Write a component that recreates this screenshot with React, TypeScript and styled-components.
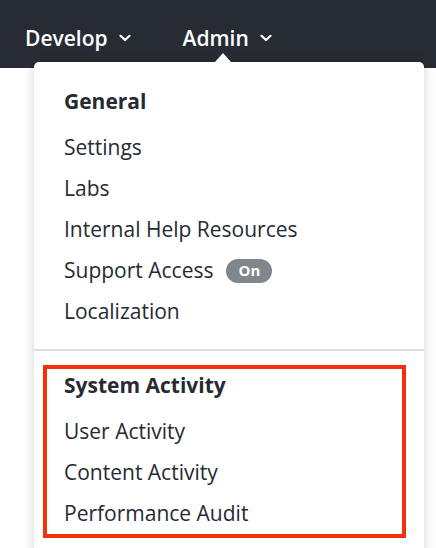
import React from 'react';
import styled, { createGlobalStyle } from 'styled-components';

const GlobalStyle = createGlobalStyle`
  html, body {
    margin: 0;
    padding: 0;
    background: #ffffff;
    font-family: 'Open Sans', 'Liberation Sans', sans-serif;
    -webkit-font-smoothing: antialiased;
  }
`;

const Page = styled.div`
  position: relative;
  width: 436px;
  height: 548px;
  overflow: hidden;
  background: #ffffff;
`;

const TopBar = styled.nav`
  display: flex;
  align-items: center;
  gap: 52px;
  height: 68px;
  padding: 8px 0 0 25px;
  box-sizing: border-box;
  background: #272b33;
`;

const NavItem = styled.div`
  display: flex;
  align-items: center;
  gap: 11px;
  color: #ffffff;
  font-size: 21px;
  font-weight: 600;
`;

const Menu = styled.div`
  position: absolute;
  left: 34px;
  top: 62px;
  width: 390px;
  padding-bottom: 20px;
  background: #ffffff;
  border-radius: 5px;
  box-shadow: 0 2px 12px rgba(0, 0, 0, 0.18);

  &::before {
    content: '';
    position: absolute;
    top: -9px;
    left: 181px;
    border-left: 8px solid transparent;
    border-right: 8px solid transparent;
    border-bottom: 9px solid #ffffff;
  }
`;

const Section = styled.div<{ $highlight?: boolean }>`
  display: flex;
  flex-direction: column;
  padding: ${p => (p.$highlight ? '0 0 0 17px' : '23px 0 17px 30px')};
  margin: ${p => (p.$highlight ? '14px 18px 0 9px' : '0')};
  border: ${p => (p.$highlight ? '4px solid #f3300d' : 'none')};
`;

const Divider = styled.hr`
  margin: 0;
  border: none;
  height: 2px;
  background: #e0e0e0;
`;

const Heading = styled.div`
  color: #262a32;
  font-size: 21px;
  font-weight: 700;
  line-height: 32px;
  margin-bottom: 10px;
`;

const Item = styled.div`
  display: flex;
  align-items: center;
  gap: 13px;
  color: #262a32;
  font-size: 21px;
  line-height: 41px;
`;

const Badge = styled.span`
  display: inline-flex;
  align-items: center;
  justify-content: center;
  width: 46px;
  height: 24px;
  border-radius: 12px;
  background: #7f878d;
  color: #ffffff;
  font-size: 15px;
  font-weight: 700;
  line-height: 1;
`;

const Chevron = () => (
  <svg width="12" height="8" viewBox="0 0 12 8" fill="none">
    <path d="M1.5 1.8 L6 6 L10.5 1.8" stroke="#ffffff" strokeWidth="2.2" strokeLinecap="round" strokeLinejoin="round" />
  </svg>
);

const general = ['Settings', 'Labs', 'Internal Help Resources', 'Support Access', 'Localization'];
const activity = ['User Activity', 'Content Activity', 'Performance Audit'];

export default function App() {
  return (
    <Page>
      <GlobalStyle />
      <TopBar>
        <NavItem>
          Develop <Chevron />
        </NavItem>
        <NavItem>
          Admin <Chevron />
        </NavItem>
      </TopBar>
      <Menu>
        <Section>
          <Heading>General</Heading>
          {general.map(label => (
            <Item key={label}>
              {label}
              {label === 'Support Access' && <Badge>On</Badge>}
            </Item>
          ))}
        </Section>
        <Divider />
        <Section $highlight>
          <Heading>System Activity</Heading>
          {activity.map(label => (
            <Item key={label}>{label}</Item>
          ))}
        </Section>
      </Menu>
    </Page>
  );
}
